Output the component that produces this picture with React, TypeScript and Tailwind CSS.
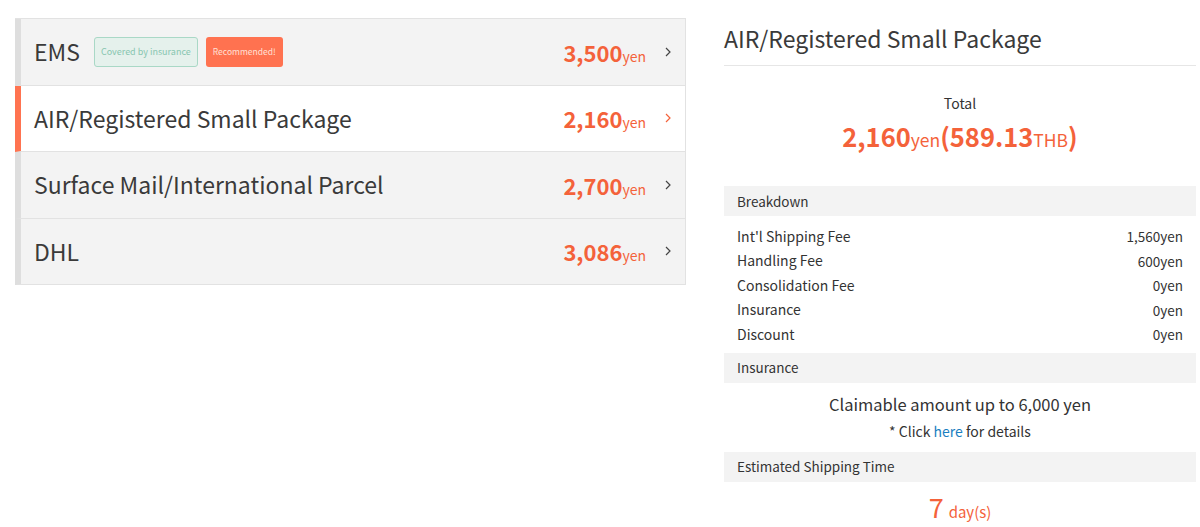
import React from "react";

const font = { fontFamily: '"Noto Sans CJK JP", "Noto Sans", sans-serif' };

function Chevron({ active }: { active?: boolean }) {
  return (
    <svg width="8" height="12" viewBox="0 0 8 12" className="ml-[18px] mr-[13px]">
      <path d="M2 2 L6 6 L2 10" fill="none" stroke={active ? "#f4623a" : "#444"} strokeWidth="1.2" />
    </svg>
  );
}

function Row({ name, price, active, badges }: { name: string; price: string; active?: boolean; badges?: boolean }) {
  return (
    <div
      className={`flex items-center h-[66.5px] border-b border-[#e2e2e2] border-l-[6px] ${
        active ? "bg-white border-l-[#ff7350]" : "bg-[#f3f3f3] border-l-[#dedede]"
      }`}
    >
      <div className="pl-[13px] flex items-center flex-1">
        <span className="text-[23px] text-[#3a3a3a] leading-none">{name}</span>
        {badges && (
          <div className="flex items-center ml-[14px] gap-[8px]">
            <span className="h-[30px] px-[6px] flex items-center rounded-[3px] border border-[#a9d8c6] bg-[#e5f1ec] text-[#88c6b0] text-[9px]">
              Covered by insurance
            </span>
            <span className="h-[30px] px-[7px] flex items-center rounded-[3px] bg-[#ff7250] text-[#ffe0d6] text-[8.5px]">
              Recommended!
            </span>
          </div>
        )}
      </div>
      <div className="flex items-baseline text-[#f4623a]">
        <span className="text-[22px] font-bold leading-none">{price}</span>
        <span className="text-[14px] leading-none">yen</span>
      </div>
      <Chevron active={active} />
    </div>
  );
}

function SectionHead({ children }: { children: React.ReactNode }) {
  return <div className="bg-[#f3f3f3] h-[30px] flex items-center px-[13px] text-[13.5px] text-[#333]">{children}</div>;
}

function Line({ label, value }: { label: string; value: string }) {
  return (
    <div className="flex justify-between items-center h-[24.5px] px-[13px] text-[14px] text-[#333]">
      <span>{label}</span>
      <span className="text-[13.5px]">{value}</span>
    </div>
  );
}

export default function App() {
  return (
    <div className="w-[1200px] h-[527px] bg-white overflow-hidden flex pl-[15px] pt-[18px]" style={font}>
      <div className="w-[671px]">
        <div className="border-t border-r border-[#e2e2e2]">
          <Row name="EMS" price="3,500" badges />
          <Row name="AIR/Registered Small Package" price="2,160" active />
          <Row name="Surface Mail/International Parcel" price="2,700" />
          <Row name="DHL" price="3,086" />
        </div>
      </div>
      <div className="w-[472px] ml-[38px] -mt-[18px]">
        <div className="h-[66px] flex items-center border-b border-[#e6e6e6] text-[23px] text-[#3a3a3a] pt-[11px]">
          AIR/Registered Small Package
        </div>
        <div className="flex flex-col items-center pt-[30px] pb-[34px]">
          <div className="text-[14px] text-[#333] leading-[14px]">Total</div>
          <div className="flex items-baseline text-[#f4623a] mt-[13px] leading-[25px]">
            <span className="text-[25.5px] font-bold">2,160</span>
            <span className="text-[17.5px]">yen</span>
            <span className="text-[25.5px] font-bold">(589.13</span>
            <span className="text-[17.5px]">THB</span>
            <span className="text-[25.5px] font-bold">)</span>
          </div>
        </div>
        <div>
          <SectionHead>Breakdown</SectionHead>
          <div className="pt-[8px] pb-[6px]">
            <Line label="Int'l Shipping Fee" value="1,560yen" />
            <Line label="Handling Fee" value="600yen" />
            <Line label="Consolidation Fee" value="0yen" />
            <Line label="Insurance" value="0yen" />
            <Line label="Discount" value="0yen" />
          </div>
          <SectionHead>Insurance</SectionHead>
          <div className="flex flex-col items-center pt-[10px] pb-[12px]">
            <div className="text-[16.5px] text-[#333] leading-[22px]">Claimable amount up to 6,000 yen</div>
            <div className="text-[14px] text-[#333] mt-[7px] leading-[18px]">
              * Click <span className="text-[#1a7fc1]">here</span> for details
            </div>
          </div>
          <SectionHead>Estimated Shipping Time</SectionHead>
          <div className="flex justify-center items-baseline text-[#f4623a] pt-[11px] leading-[28px]">
            <span className="text-[27px]">7</span>
            <span className="text-[15px] ml-[5px]">day(s)</span>
          </div>
        </div>
      </div>
    </div>
  );
}
